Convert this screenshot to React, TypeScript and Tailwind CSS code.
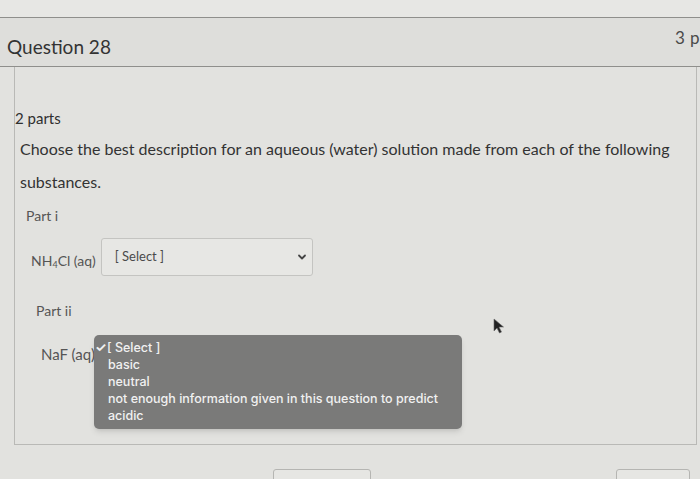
import React from 'react';

const options = ['basic', 'neutral', 'not enough information given in this question to predict', 'acidic'];

const Chevron = () => (
  <svg width="10" height="10" viewBox="0 0 10 10" className="text-[#444]">
    <path d="M2 3.5 L5 6.5 L8 3.5" fill="none" stroke="currentColor" strokeWidth="1.8" strokeLinecap="round" strokeLinejoin="round" />
  </svg>
);

const Cursor = () => (
  <svg width="12" height="16" viewBox="0 0 12 16">
    <path d="M1 1 L1 13 L4 10 L6.5 15 L8.5 14 L6 9 L10.5 9 Z" fill="#222" stroke="#666" strokeWidth="0.6" />
  </svg>
);

export default function App() {
  return (
    <div className="relative w-[700px] h-[479px] overflow-hidden bg-[#e2e2df] text-[#3b3b3b]" style={{ fontFamily: 'Lato, "Open Sans", sans-serif' }}>
      {/* top strip */}
      <div className="h-[18px] bg-[#e7e7e4] border-b border-[#8f8f8c]" />

      {/* question header */}
      <div className="h-[49px] flex items-start justify-between bg-[#dededb] border-b border-[#8f8f8c]">
        <div className="pl-[7px] pt-[17px] text-[19px] leading-6 text-[#333]">Question 28</div>
        <div className="pt-[7px] text-[17px] text-[#4a4a4a] tracking-wide">3 p</div>
      </div>

      {/* body */}
      <div className="ml-[14px] mr-[3px] h-[378px] border-l border-r border-b border-[#b9b9b6] pt-[41px]">
        <div className="text-[15px] leading-5 text-[#2f2f2f]">2 parts</div>

        <p className="mt-[4px] pl-[5px] text-[16px] leading-[33px] text-[#333] max-w-[675px]">
          Choose the best description for an aqueous (water) solution made from each of the following substances.
        </p>

        <div className="mt-[7px] pl-[11px] text-[14px] text-[#555]">Part i</div>

        <div className="mt-[12px] pl-[16px] flex items-center gap-[5px]">
          <span className="pt-[6px] text-[14px] text-[#555]">
            NH<sub className="text-[9px]">4</sub>Cl (aq)
          </span>
          <div className="w-[212px] h-[38px] flex items-center justify-between pl-[13px] pr-[5px] bg-[#e7e7e4] border border-[#c4c4c1] rounded-[3px]">
            <span className="text-[13px] text-[#4a4a4a]">[ Select ]</span>
            <Chevron />
          </div>
        </div>

        <div className="mt-[24px] pl-[21px] text-[14px] text-[#555]">Part ii</div>

        <div className="relative mt-[14px] pl-[26px] flex items-center gap-[5px]">
          <span className="text-[15px] text-[#555]">NaF (aq)</span>
          <div className="w-[206px] h-[38px] bg-[#e7e7e4] border border-[#c4c4c1] rounded-[3px]" />

          {/* open native dropdown */}
          <div
            className="absolute left-[79px] top-[0px] w-[368px] h-[94px] rounded-[5px] bg-[#7a7a79] pt-[4px] text-[12.5px] leading-[17px] font-medium text-[#f1f1f1] shadow-md"
            style={{ fontFamily: 'Inter, "Liberation Sans", sans-serif' }}
          >
            <div className="flex items-center">
              <span className="w-[13px] pl-[1px] text-[13px] font-bold leading-[17px]">✓</span>
              <span>[ Select ]</span>
            </div>
            {options.map((o) => (
              <div key={o} className="pl-[14px]">{o}</div>
            ))}
          </div>
        </div>
      </div>

      {/* bottom buttons peeking */}
      <div className="flex justify-between pl-[273px] pr-[10px] pt-[24px]">
        <div className="w-[98px] h-[20px] border border-[#b5b5b2] rounded-[3px] bg-[#e6e6e3]" />
        <div className="w-[74px] h-[20px] border border-[#b5b5b2] rounded-[3px] bg-[#e6e6e3]" />
      </div>

      <div className="absolute left-[493px] top-[318px]">
        <Cursor />
      </div>
    </div>
  );
}
